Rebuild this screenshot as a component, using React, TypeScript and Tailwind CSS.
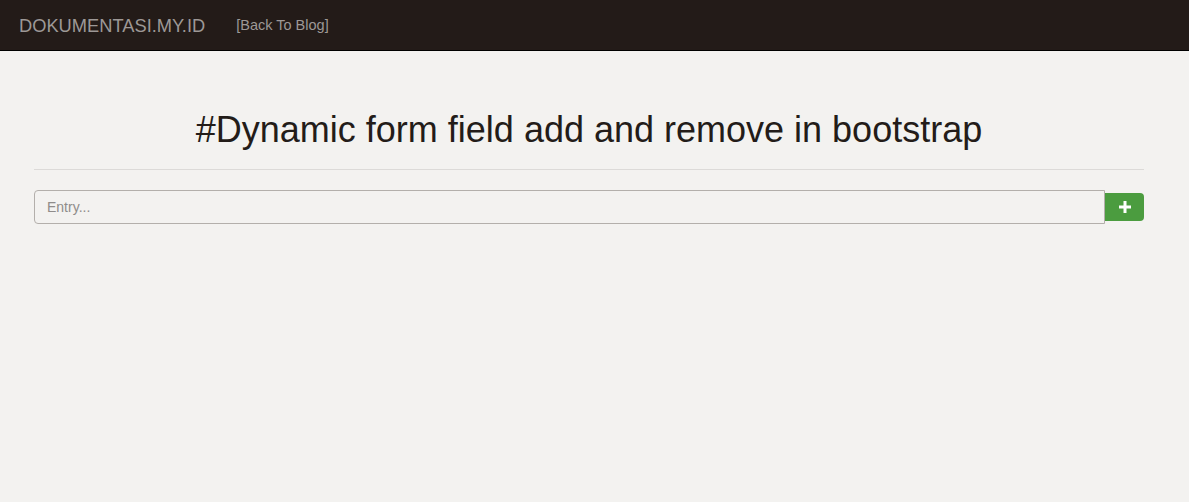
import React from 'react';

const App: React.FC = () => {
  return (
    <div className="min-h-[502px] bg-[#f3f2f0] font-['Liberation_Sans',Arial,sans-serif]">
      <nav className="h-[51px] bg-[#231b18] border-b border-black flex items-center">
        <span className="ml-[19px] pt-[1px] text-[18.3px] text-[#9d9896]">DOKUMENTASI.MY.ID</span>
        <a className="ml-[31px] pt-[1px] text-[14.5px] text-[#9d9896]">[Back To Blog]</a>
      </nav>
      <div className="ml-[34px] w-[1110px]">
        <h1 className="mt-[59px] text-center text-[36px] leading-[40px] text-[#231c19]">
          #Dynamic form field add and remove in bootstrap
        </h1>
        <hr className="mt-[19px] border-t border-[#dcdad8]" />
        <div className="mt-[20px] flex items-center">
          <input
            type="text"
            placeholder="Entry..."
            className="flex-1 h-[34px] rounded-l-[4px] border border-[#b3afab] bg-[#f3f2f0] px-3 text-[14px] text-[#555] placeholder:text-[#8f8c8a] outline-none"
          />
          <button className="w-[39px] h-[28px] rounded-r-[4px] bg-[#4b9c3f] flex items-center justify-center">
            <svg width="12" height="12" viewBox="0 0 12 12">
              <path d="M4.5 0h3v4.5H12v3H7.5V12h-3V7.5H0v-3h4.5z" fill="#fff" />
            </svg>
          </button>
        </div>
      </div>
    </div>
  );
};

export default App;
